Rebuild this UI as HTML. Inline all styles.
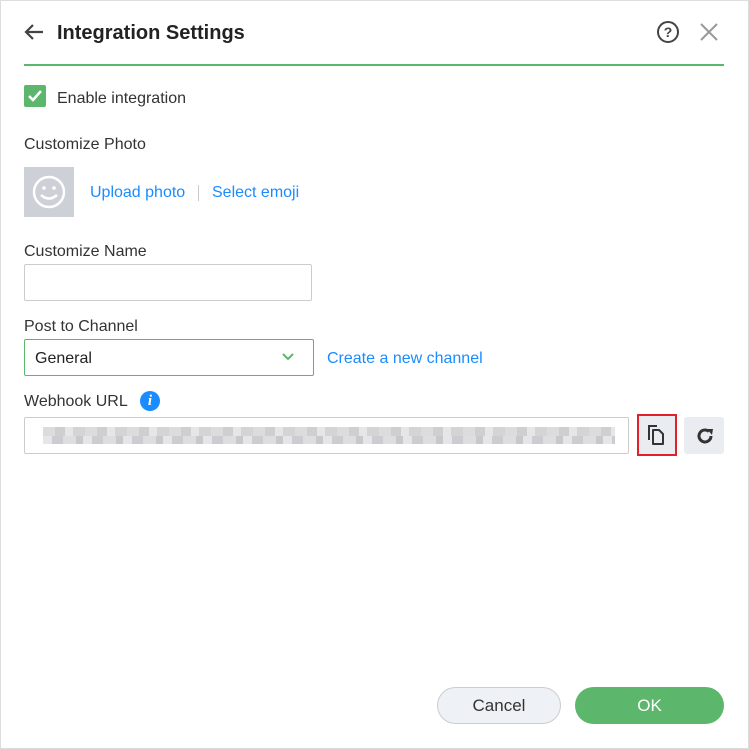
<!DOCTYPE html>
<html><head><style>
*{box-sizing:border-box;margin:0;padding:0}
body{width:749px;height:749px;background:#fff;font-family:"Liberation Sans",sans-serif;position:relative;overflow:hidden;color:#222;box-shadow:inset 0 0 0 1px #ddd}
.a{position:absolute}
.t{font-size:16px;color:#333;margin-top:1px}
.link{color:#1a8cff;font-size:16px;margin-top:1px}
.box{border:1px solid #ccc;border-radius:2px;background:#fff}
</style></head><body>
<svg class="a" style="left:23px;top:22px" width="22" height="20" viewBox="0 0 22 20"><path d="M20 10H3M10 3L3 10l7 7" stroke="#444" stroke-width="2.2" fill="none"/></svg>
<div class="a" style="left:57px;top:22px;font-size:20px;font-weight:bold;color:#222">Integration Settings</div>
<svg class="a" style="left:656px;top:20px" width="24" height="24" viewBox="0 0 24 24"><circle cx="12" cy="12" r="10" stroke="#444" stroke-width="2" fill="none"/><text x="12" y="17" text-anchor="middle" font-size="14" font-weight="bold" fill="#444" font-family="Liberation Sans">?</text></svg>
<svg class="a" style="left:699px;top:22px" width="20" height="20" viewBox="0 0 20 20"><path d="M2 2L18 18M18 2L2 18" stroke="#999" stroke-width="2"/></svg>
<div class="a" style="left:24px;top:64px;width:700px;height:2px;background:#5cb66b"></div>
<div class="a" style="left:24px;top:85px;width:22px;height:22px;background:#5cb66b;border-radius:2px"></div>
<svg class="a" style="left:24px;top:85px" width="22" height="22"><path d="M5 11l4 4 8-9" stroke="#fff" stroke-width="2.5" fill="none"/></svg>
<div class="a t" style="left:57px;top:89px">Enable integration</div>
<div class="a t" style="left:24px;top:135px">Customize Photo</div>
<div class="a" style="left:24px;top:167px;width:50px;height:50px;background:#cdd0d6"></div>
<svg class="a" style="left:24px;top:167px" width="50" height="50"><circle cx="25" cy="25" r="15" stroke="#fff" stroke-width="2.5" fill="none"/><circle cx="20" cy="21" r="1.8" fill="#fff"/><circle cx="30" cy="21" r="1.8" fill="#fff"/><path d="M17 28q8 7 16 0" stroke="#fff" stroke-width="2.5" fill="none"/></svg>
<div class="a link" style="left:90px;top:183px">Upload photo</div>
<div class="a" style="left:198px;top:185px;width:1px;height:16px;background:#ccc"></div>
<div class="a link" style="left:212px;top:183px">Select emoji</div>
<div class="a t" style="left:24px;top:242px">Customize Name</div>
<div class="a box" style="left:24px;top:264px;width:288px;height:37px"></div>
<div class="a t" style="left:24px;top:317px">Post to Channel</div>
<div class="a" style="left:24px;top:339px;width:290px;height:37px;border:1px solid #5cb66b;border-radius:2px"></div>
<div class="a t" style="left:35px;top:349px;color:#222">General</div>
<svg class="a" style="left:281px;top:352px" width="14" height="10"><path d="M2 2l5 5 5-5" stroke="#5cb66b" stroke-width="2" fill="none"/></svg>
<div class="a link" style="left:327px;top:349px">Create a new channel</div>
<div class="a t" style="left:24px;top:392px">Webhook URL</div>
<div class="a" style="left:140px;top:391px;width:20px;height:20px;border-radius:50%;background:#1a8cff;color:#fff;font:italic bold 15px 'Liberation Serif',serif;text-align:center;line-height:20px">i</div>
<div class="a box" style="left:24px;top:417px;width:605px;height:37px"></div>
<div class="a" style="left:43px;top:427px;width:572px;height:9px;background:repeating-linear-gradient(90deg,#dcdcde 0 12px,#cfcfd2 12px 22px,#e6e6e8 22px 30px,#d4d4d7 30px 42px)"></div>
<div class="a" style="left:43px;top:436px;width:572px;height:8px;background:repeating-linear-gradient(90deg,#e6e6e8 0 9px,#cdcdd1 9px 20px,#dedee0 20px 33px,#c9c9cd 33px 40px)"></div>
<div class="a" style="left:637px;top:414px;width:40px;height:42px;border:2px solid #e0202a;background:#e9ecf1"></div>
<svg class="a" style="left:645px;top:423px" width="24" height="24" viewBox="0 0 24 24"><path d="M4 17V3h8" stroke="#333" stroke-width="2" fill="none"/><path d="M8 7h6l4 4v10H8z" stroke="#333" stroke-width="2" fill="none" stroke-linejoin="round"/></svg>
<div class="a" style="left:684px;top:417px;width:40px;height:37px;background:#e9ecf1;border-radius:3px"></div>
<svg class="a" style="left:694px;top:425px" width="22" height="22" viewBox="0 0 22 22"><path d="M17 11a6 6 0 1 1-2-4.5" stroke="#333" stroke-width="3" fill="none"/><path d="M13 4l6 0-1 6z" fill="#333"/></svg>
<div class="a" style="left:437px;top:687px;width:124px;height:37px;border:1px solid #ccc;border-radius:19px;background:#eef1f6;text-align:center;line-height:35px;font-size:17px;color:#333">Cancel</div>
<div class="a" style="left:575px;top:687px;width:149px;height:37px;border-radius:19px;background:#5cb66b;text-align:center;line-height:37px;font-size:17px;color:#fff">OK</div>
</body></html>
